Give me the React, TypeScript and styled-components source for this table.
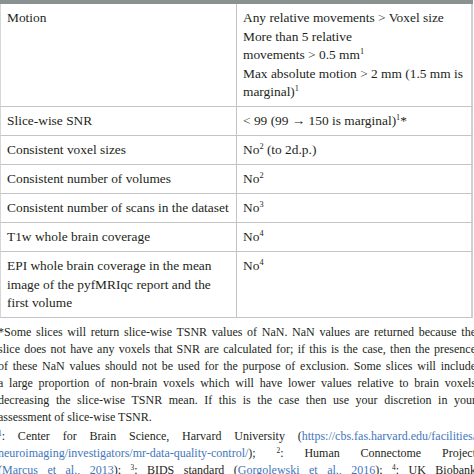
import styled, { createGlobalStyle } from "styled-components";

const GlobalStyle = createGlobalStyle`
  html, body {
    margin: 0;
    padding: 0;
    background: #ffffff;
  }
  body {
    font-family: "Liberation Serif", "Times New Roman", serif;
    color: #231f20;
  }
`;

const Page = styled.div`
  width: 474px;
  height: 474px;
  overflow: hidden;
  position: relative;
`;

const Table = styled.div`
  width: 473px;
  border-top: 4px solid #8a9191;
  font-family: "Liberation Serif", "Times New Roman", serif;
  color: #231f20;
  font-size: 13.4px;
  line-height: 18.5px;
`;

const Row = styled.div`
  display: grid;
  grid-template-columns: 235px 1fr;
  border-bottom: 1px solid #c4c4c4;
  border-left: 1px solid #d6d6d6;
  border-right: 2px solid #d0d0d0;
`;

const Cell = styled.div<{ $right?: boolean }>`
  padding: 5px 4px 4.5px 6px;
  border-left: ${(p) => (p.$right ? "1px solid #c4c4c4" : "none")};
`;

const Line = styled.div``;

const Sup = styled.sup`
  font-size: 0.62em;
  line-height: 0;
  vertical-align: 0;
  position: relative;
  top: -0.55em;
`;

const Notes = styled.div`
  width: 478px;
  margin: 6px 0 0 -2px;
  font-size: 12px;
  line-height: 17px;
`;

const NoteLine = styled.div<{ $last?: boolean }>`
  white-space: nowrap;
  text-align: ${(p) => (p.$last ? "left" : "justify")};
  text-align-last: ${(p) => (p.$last ? "left" : "justify")};
`;

const Gap = styled.div`
  height: 2px;
`;

const Link = styled.span`
  color: #3f77bb;
`;

type RowData = { label: string[]; value: React.ReactNode };

const rows: RowData[] = [
  {
    label: ["Slice-wise SNR"],
    value: (
      <>
        &lt; 99 (99 → 150 is marginal)<Sup>1</Sup>*
      </>
    ),
  },
  {
    label: ["Consistent voxel sizes"],
    value: (
      <>
        No<Sup>2</Sup> (to 2d.p.)
      </>
    ),
  },
  { label: ["Consistent number of volumes"], value: <>No<Sup>2</Sup></> },
  { label: ["Consistent number of scans in the dataset"], value: <>No<Sup>3</Sup></> },
  { label: ["T1w whole brain coverage"], value: <>No<Sup>4</Sup></> },
  {
    label: [
      "EPI whole brain coverage in the mean",
      "image of the pyfMRIqc report and the",
      "first volume",
    ],
    value: <>No<Sup>4</Sup></>,
  },
];

export default function App() {
  return (
    <Page>
      <GlobalStyle />
      <Table>
        <Row>
          <Cell>Motion</Cell>
          <Cell $right>
            <Line>Any relative movements &gt; Voxel size</Line>
            <Line>More than 5 relative</Line>
            <Line>
              movements &gt; 0.5 mm<Sup>1</Sup>
            </Line>
            <Line>Max absolute motion &gt; 2 mm (1.5 mm is</Line>
            <Line>
              marginal)<Sup>1</Sup>
            </Line>
          </Cell>
        </Row>
        {rows.map((r, i) => (
          <Row key={i}>
            <Cell>
              {r.label.map((l, j) => (
                <Line key={j}>{l}</Line>
              ))}
            </Cell>
            <Cell $right>{r.value}</Cell>
          </Row>
        ))}
      </Table>
      <Notes>
        <NoteLine>
          *Some slices will return slice-wise TSNR values of NaN. NaN values are returned because the
        </NoteLine>
        <NoteLine>
          slice does not have any voxels that SNR are calculated for; if this is the case, then the presence
        </NoteLine>
        <NoteLine>
          of these NaN values should not be used for the purpose of exclusion. Some slices will include
        </NoteLine>
        <NoteLine>
          a large proportion of non-brain voxels which will have lower values relative to brain voxels
        </NoteLine>
        <NoteLine>
          decreasing the slice-wise TSNR mean. If this is the case then use your discretion in your
        </NoteLine>
        <NoteLine $last>assessment of slice-wise TSNR.</NoteLine>
        <Gap />
        <NoteLine>
          <Sup>1</Sup>: Center for Brain Science, Harvard University (
          <Link>https://cbs.fas.harvard.edu/facilities/</Link>
        </NoteLine>
        <NoteLine>
          <Link>neuroimaging/investigators/mr-data-quality-control/</Link>); <Sup>2</Sup>: Human Connectome Project
        </NoteLine>
        <NoteLine>
          (<Link>Marcus et al., 2013</Link>); <Sup>3</Sup>: BIDS standard (<Link>Gorgolewski et al., 2016</Link>);{" "}
          <Sup>4</Sup>: UK Biobank
        </NoteLine>
      </Notes>
    </Page>
  );
}
